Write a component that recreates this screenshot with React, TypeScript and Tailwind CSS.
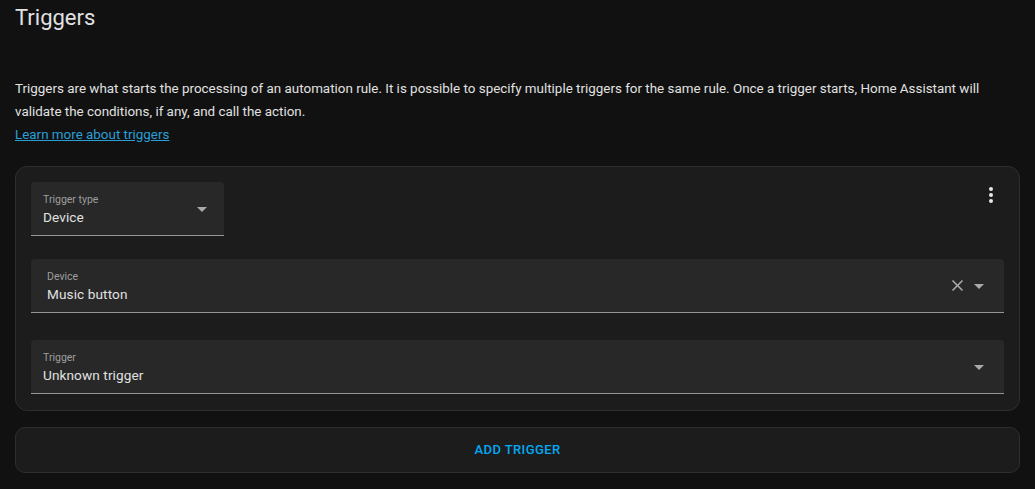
import React from "react";

function Caret() {
  return (
    <svg width="24" height="24" viewBox="0 0 24 24" className="fill-[#aaaaaa]">
      <path d="M7 10l5 5 5-5z" />
    </svg>
  );
}

function Field({
  label,
  value,
  padX,
  extra,
  className,
}: {
  label: string;
  value: string;
  padX: string;
  extra?: React.ReactNode;
  className?: string;
}) {
  return (
    <div
      className={`relative h-[54px] rounded-t-[4px] bg-[#282828] border-b border-[#959595] flex items-center ${padX} ${className ?? ""}`}
    >
      <div className="flex-1 flex flex-col pt-[3px]">
        <span className="text-[10.5px] leading-[14px] text-[#9e9e9e]">{label}</span>
        <span className="text-[13.6px] leading-[20px] text-[#e1e1e1] tracking-[0.1px]">{value}</span>
      </div>
      <div className="flex items-center mr-[-2px]">
        {extra}
        <Caret />
      </div>
    </div>
  );
}

export default function App() {
  return (
    <div
      className="w-[1035px] h-[489px] overflow-hidden bg-[#111111] text-[#e1e1e1]"
      style={{ fontFamily: "Roboto, 'Noto Sans', sans-serif" }}
    >
      <div className="px-[15px]">
        <h1 className="text-[22px] leading-[34px] pt-[1px] text-[#e1e1e1] font-normal">Triggers</h1>
        <p className="mt-[42px] text-[13.4px] leading-[23px] text-[#e1e1e1]">
          Triggers are what starts the processing of an automation rule. It is possible to specify multiple triggers for the same rule. Once a trigger starts, Home Assistant will validate the conditions, if any, and call the action.
        </p>
        <a className="block text-[13.4px] leading-[23px] text-[#2a9fd6] underline w-fit">
          Learn more about triggers
        </a>
        <div className="mt-[20px] h-[245px] rounded-[12px] border border-[#2e2e2e] bg-[#1c1c1c] px-[15px] pt-[15px] relative">
          <button className="absolute right-[16px] top-[16px] w-[24px] h-[24px] flex items-center justify-center">
            <svg width="24" height="24" viewBox="0 0 24 24" className="fill-[#e8e8e8]">
              <path d="M12,16A2,2 0 0,1 14,18A2,2 0 0,1 12,20A2,2 0 0,1 10,18A2,2 0 0,1 12,16M12,10A2,2 0 0,1 14,12A2,2 0 0,1 12,14A2,2 0 0,1 10,12A2,2 0 0,1 12,10M12,4A2,2 0 0,1 14,6A2,2 0 0,1 12,8A2,2 0 0,1 10,6A2,2 0 0,1 12,4Z" />
            </svg>
          </button>
          <Field label="Trigger type" value="Device" padX="pl-[12px] pr-[12px]" className="w-[193px]" />
          <Field
            label="Device"
            value="Music button"
            padX="pl-[16px] pr-[15px]"
            className="mt-[23px]"
            extra={
              <svg width="19" height="19" viewBox="0 0 24 24" className="fill-[#aaaaaa]">
                <path d="M19,6.41L17.59,5L12,10.59L6.41,5L5,6.41L10.59,12L5,17.59L6.41,19L12,13.41L17.59,19L19,17.59L13.41,12L19,6.41Z" />
              </svg>
            }
          />
          <Field label="Trigger" value="Unknown trigger" padX="pl-[12px] pr-[15px]" className="mt-[27px]" />
        </div>
        <button className="mt-[16px] w-full h-[46px] rounded-[10px] border border-[#2e2e2e] bg-[#1c1c1c] flex items-center justify-center">
          <span className="text-[13px] font-medium tracking-[0.4px] text-[#03a9f4]">ADD TRIGGER</span>
        </button>
      </div>
    </div>
  );
}
